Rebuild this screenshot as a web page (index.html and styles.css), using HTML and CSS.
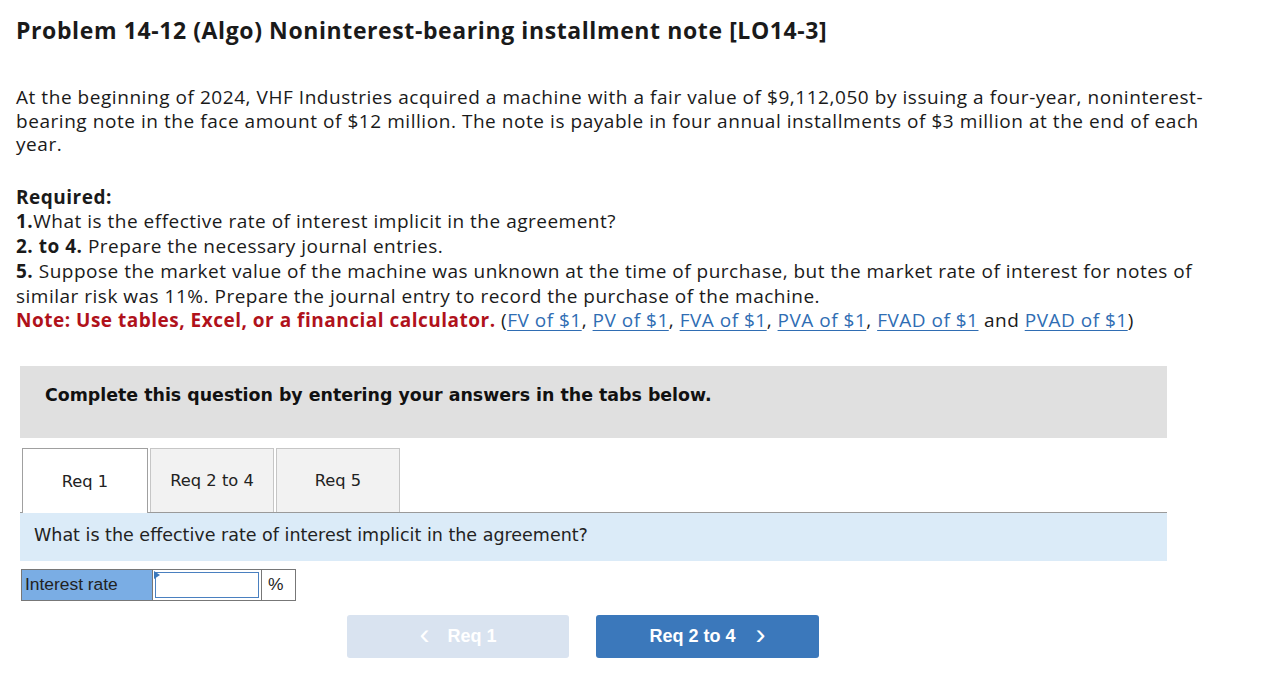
FILE: index.html
```html
<!DOCTYPE html>
<html lang="en">
<head>
  <meta charset="UTF-8" />
  <title>Problem 14-12 (Algo)</title>
  <link rel="stylesheet" href="styles.css">
</head>
<body>
  <div class="page">
    <h1 class="title">Problem 14-12 (Algo) Noninterest-bearing installment note [LO14-3]</h1>

    <p class="intro">At the beginning of 2024, VHF Industries acquired a machine with a fair value of $9,112,050 by issuing a four-year, noninterest-bearing note in the face amount of $12 million. The note is payable in four annual installments of $3 million at the end of each year.</p>

    <div class="required">
      <strong>Required:</strong><br>
      <strong>1.</strong>What is the effective rate of interest implicit in the agreement?<br>
      <strong>2. to 4.</strong> Prepare the necessary journal entries.<br>
      <strong>5.</strong> Suppose the market value of the machine was unknown at the time of purchase, but the market rate of interest for notes of similar risk was 11%. Prepare the journal entry to record the purchase of the machine.<br>
      <span class="note">Note: Use tables, Excel, or a financial calculator.</span> (<a href="#">FV of $1</a>, <a href="#">PV of $1</a>, <a href="#">FVA of $1</a>, <a href="#">PVA of $1</a>, <a href="#">FVAD of $1</a> and <a href="#">PVAD of $1</a>)
    </div>

    <div class="instructions">Complete this question by entering your answers in the tabs below.</div>

    <div class="tabs">
      <div class="tab active">Req 1</div>
      <div class="tab">Req 2 to 4</div>
      <div class="tab">Req 5</div>
    </div>

    <div class="question">What is the effective rate of interest implicit in the agreement?</div>

    <div class="answer-row">
      <div class="answer-label">Interest rate</div>
      <div class="answer-input"><span class="marker"></span></div>
      <div class="answer-unit">%</div>
    </div>

    <div class="nav">
      <button class="nav-btn prev"><span class="chev">&lsaquo;</span>Req 1</button>
      <button class="nav-btn next">Req 2 to 4<span class="chev">&rsaquo;</span></button>
    </div>
  </div>
</body>
</html>
```

FILE: styles.css
```css
body {
  margin: 0;
  padding: 0;
  background: #fff;
  color: #1a1a1a;
  font-family: 'Open Sans', 'Lato', sans-serif;
}
.page {
  padding: 16px 16px 0 16px;
  width: 1200px;
}
.title {
  font-size: 23px;
  font-weight: 700;
  letter-spacing: 0.6px;
  margin: 0;
  line-height: 28px;
  color: #1a1a1a;
}
.intro {
  font-size: 19px;
  letter-spacing: 0.55px;
  line-height: 23.5px;
  margin: 42px 0 0 0;
}
.required {
  font-size: 19px;
  letter-spacing: 0.5px;
  line-height: 24.8px;
  margin-top: 28px;
}
.required strong {
  font-weight: 700;
}
.note {
  color: #b0121b;
  font-weight: 700;
}
.required a {
  color: #2f6db3;
  text-decoration: underline;
  text-underline-offset: 3px;
}
.instructions {
  margin: 33px 0 0 4px;
  width: 1147px;
  height: 72px;
  box-sizing: border-box;
  background: #e0e0e0;
  padding: 19px 25px;
  font-family: 'DejaVu Sans', Tahoma, sans-serif;
  font-weight: 700;
  font-size: 17.4px;
  color: #111;
}
.tabs {
  display: flex;
  gap: 2px;
  margin: 10px 0 0 6px;
}
.tab {
  width: 124px;
  height: 64px;
  box-sizing: border-box;
  border: 1px solid #c6c6c6;
  border-bottom: none;
  background: #f2f2f2;
  display: flex;
  align-items: center;
  justify-content: center;
  font-family: 'DejaVu Sans', Tahoma, sans-serif;
  font-size: 16.3px;
  color: #222;
}
.tab.active {
  width: 126px;
  height: 65px;
  background: #fff;
  border-color: #a0a0a0;
  margin-bottom: -1px;
  position: relative;
  z-index: 1;
}
.question {
  margin-left: 4px;
  width: 1147px;
  height: 49px;
  box-sizing: border-box;
  background: #dbebf8;
  border-top: 1px solid #9a9a9a;
  padding: 12px 14px;
  font-family: 'DejaVu Sans', Tahoma, sans-serif;
  font-size: 17.5px;
  color: #222;
}
.answer-row {
  display: flex;
  margin: 8px 0 0 5px;
  height: 32px;
  font-family: 'Liberation Sans', Arial, sans-serif;
  font-size: 17.4px;
}
.answer-label {
  width: 132px;
  box-sizing: border-box;
  background: #7aade4;
  border: 1px solid #777;
  padding: 4px 3px;
  color: #222;
}
.answer-input {
  width: 109px;
  box-sizing: border-box;
  border: 1px solid #777;
  border-left: none;
  background: #fff;
  position: relative;
  box-shadow: inset 0 0 0 2px #fff, inset 0 0 0 3px #4a80c0;
}
.marker {
  position: absolute;
  left: 1px;
  top: 1px;
  width: 0;
  height: 0;
  border-top: 4px solid transparent;
  border-bottom: 4px solid transparent;
  border-left: 6px solid #3b78bb;
}
.answer-unit {
  width: 34px;
  box-sizing: border-box;
  border: 1px solid #777;
  border-left: none;
  padding: 4px 6px;
  color: #222;
}
.nav {
  display: flex;
  gap: 27px;
  margin: 14px 0 0 331px;
}
.nav-btn {
  width: 222px;
  height: 43px;
  border: none;
  border-radius: 3px;
  font-family: 'Liberation Sans', Arial, sans-serif;
  font-weight: 700;
  font-size: 18px;
  color: #fff;
  display: flex;
  align-items: center;
  justify-content: center;
  gap: 18px;
}
.nav-btn.prev {
  background: #d9e3f0;
}
.nav-btn.next {
  background: #3b78bb;
  width: 223px;
  gap: 20px;
}
.chev {
  font-size: 30px;
  font-weight: 400;
  line-height: 20px;
  position: relative;
  top: -3px;
}
```
